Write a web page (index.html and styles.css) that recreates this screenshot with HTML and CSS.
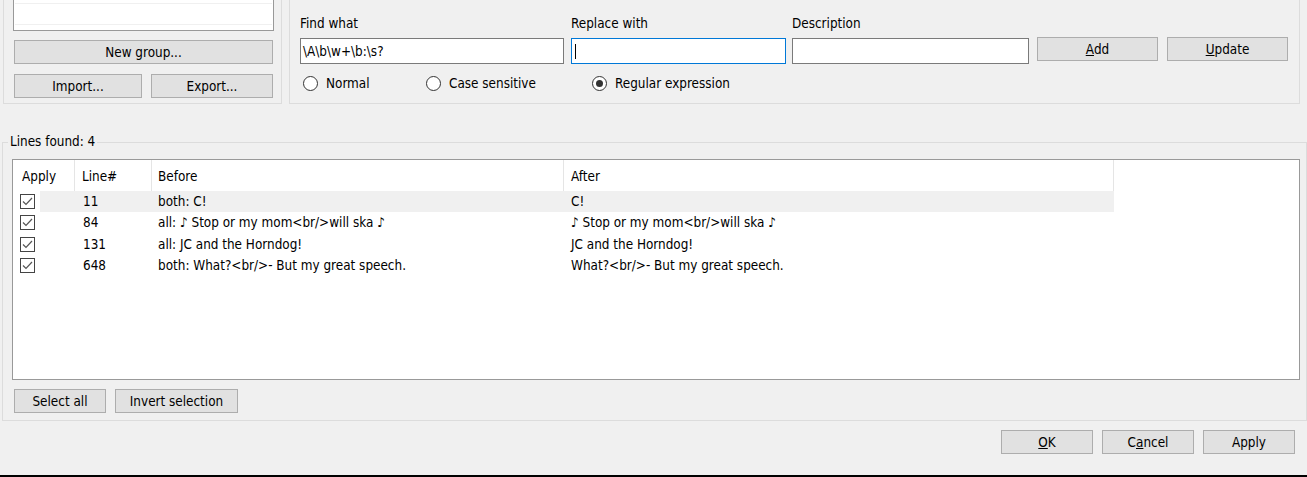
FILE: index.html
```html
<!DOCTYPE html>
<html>
<head>
<meta charset="utf-8">
<link rel="stylesheet" href="styles.css">
</head>
<body>
<div class="window">
  <div class="top">
    <div class="group group-top group-left">
      <div class="lb-small">
        <div class="lb-item first"></div>
        <div class="lb-item second"></div>
      </div>
      <button class="btn btn-newgroup">New group...</button>
      <div class="btn-row left-row">
        <button class="btn btn-import">Import...</button>
        <button class="btn btn-export">Export...</button>
      </div>
    </div>
    <div class="group group-top group-right">
      <div class="fields">
        <div class="field f-find">
          <span class="lbl">Find what</span>
          <div class="input">\A\b\w+\b:\s?</div>
        </div>
        <div class="field f-replace">
          <span class="lbl">Replace with</span>
          <div class="input focus"><span class="caret"></span></div>
        </div>
        <div class="field f-desc">
          <span class="lbl">Description</span>
          <div class="input"></div>
        </div>
        <button class="btn btn-add"><u>A</u>dd</button>
        <button class="btn btn-update"><u>U</u>pdate</button>
      </div>
      <div class="radios">
        <span class="radio r1"><span class="circle"></span>Normal</span>
        <span class="radio r2"><span class="circle"></span>Case sensitive</span>
        <span class="radio r3"><span class="circle checked"></span>Regular expression</span>
      </div>
    </div>
  </div>

  <div class="group group-lines">
    <span class="legend">Lines found: 4</span>
    <div class="listview">
      <div class="lv-header">
        <div class="col c-apply">Apply</div>
        <div class="col c-line">Line#</div>
        <div class="col c-before">Before</div>
        <div class="col c-after">After</div>
      </div>
      <div class="lv-row sel">
        <div class="cb-cell"><svg class="cb" width="15" height="15" viewBox="0 0 15 15"><rect x="0.5" y="0.5" width="14" height="14" fill="#fff" stroke="#444"/><polyline points="3,7.5 6,10.5 12,4" fill="none" stroke="#555" stroke-width="1.2"/></svg></div>
        <div class="row-body"><div class="pad"></div><div class="cell v-line">11</div><div class="cell v-before">both: C!</div><div class="cell v-after">C!</div></div>
      </div>
      <div class="lv-row">
        <div class="cb-cell"><svg class="cb" width="15" height="15" viewBox="0 0 15 15"><rect x="0.5" y="0.5" width="14" height="14" fill="#fff" stroke="#444"/><polyline points="3,7.5 6,10.5 12,4" fill="none" stroke="#555" stroke-width="1.2"/></svg></div>
        <div class="row-body"><div class="pad"></div><div class="cell v-line">84</div><div class="cell v-before">all: ♪ Stop or my mom&lt;br/&gt;will ska ♪</div><div class="cell v-after">♪ Stop or my mom&lt;br/&gt;will ska ♪</div></div>
      </div>
      <div class="lv-row">
        <div class="cb-cell"><svg class="cb" width="15" height="15" viewBox="0 0 15 15"><rect x="0.5" y="0.5" width="14" height="14" fill="#fff" stroke="#444"/><polyline points="3,7.5 6,10.5 12,4" fill="none" stroke="#555" stroke-width="1.2"/></svg></div>
        <div class="row-body"><div class="pad"></div><div class="cell v-line">131</div><div class="cell v-before">all: JC and the Horndog!</div><div class="cell v-after">JC and the Horndog!</div></div>
      </div>
      <div class="lv-row">
        <div class="cb-cell"><svg class="cb" width="15" height="15" viewBox="0 0 15 15"><rect x="0.5" y="0.5" width="14" height="14" fill="#fff" stroke="#444"/><polyline points="3,7.5 6,10.5 12,4" fill="none" stroke="#555" stroke-width="1.2"/></svg></div>
        <div class="row-body"><div class="pad"></div><div class="cell v-line">648</div><div class="cell v-before">both: What?&lt;br/&gt;- But my great speech.</div><div class="cell v-after">What?&lt;br/&gt;- But my great speech.</div></div>
      </div>
    </div>
    <div class="btn-row lines-row">
      <button class="btn btn-select">Select all</button>
      <button class="btn btn-invert">Invert selection</button>
    </div>
  </div>

  <div class="dialog-btns">
    <button class="btn btn-dlg"><u>O</u>K</button>
    <button class="btn btn-dlg">C<u>a</u>ncel</button>
    <button class="btn btn-dlg">Apply</button>
  </div>
  <div class="taskbar"></div>
</div>
</body>
</html>
```

FILE: styles.css
```css
* { box-sizing: border-box; }
html, body { margin: 0; padding: 0; }
body {
  width: 1307px;
  height: 477px;
  overflow: hidden;
  background: #f0f0f0;
  font-family: "DejaVu Sans Condensed", "DejaVu Sans", sans-serif;
  font-size: 13.4px;
  color: #000;
}
.window { display: flex; flex-direction: column; height: 477px; }
.top { display: flex; height: 104px; flex: none; }
.group { border: 1px solid #dcdcdc; }
.group-top { border-top: 0; height: 104px; }
.group-left { margin-left: 3px; width: 279px; display: flex; flex-direction: column; }
.lb-small {
  margin-left: 9px; width: 261px; height: 31px;
  background: #fff; border: 1px solid #999; border-top: 0;
  display: flex; flex-direction: column;
}
.lb-item { height: 1px; background: #f0f0f0; margin: 0 1px; }
.lb-item.first { margin-top: 3px; }
.lb-item.second { margin-top: 20px; }

.btn {
  font: inherit; color: #000;
  background: #e1e1e1; border: 1px solid #adadad;
  height: 24px; padding: 0;
  display: flex; align-items: center; justify-content: center;
  white-space: nowrap;
}
.btn-newgroup { margin: 9px 0 0 10px; width: 259px; }
.btn-row { display: flex; }
.left-row { margin: 10px 0 0 10px; gap: 9px; }
.btn-import { width: 128px; }
.btn-export { width: 122px; }

.group-right { margin-left: 7px; width: 1011px; padding-top: 16px; }
.fields { display: flex; align-items: flex-start; }
.field { display: flex; flex-direction: column; }
.lbl { line-height: 16px; height: 16px; margin-bottom: 6px; white-space: nowrap; }
.input {
  height: 26px; background: #fff; border: 1px solid #7a7a7a;
  padding-left: 2px; display: flex; align-items: center; white-space: pre;
}
.input.focus { border-color: #0078d7; }
.caret { width: 1px; height: 15px; background: #000; margin-left: 1px; }
.f-find { margin-left: 10px; width: 264px; }
.f-replace { margin-left: 7px; width: 215px; }
.f-desc { margin-left: 6px; width: 237px; }
.btn-add { margin-left: 8px; margin-top: 21px; width: 121px; }
.btn-update { margin-left: 9px; margin-top: 21px; width: 121px; }

.radios { display: flex; align-items: center; height: 16px; margin-top: 11px; padding-left: 13px; }
.radio { display: flex; align-items: center; white-space: nowrap; }
.r1 { width: 123px; }
.r2 { width: 166px; }
.circle {
  width: 15px; height: 15px; border: 1px solid #333; border-radius: 50%;
  background: #fff; margin-right: 8px;
  display: flex; align-items: center; justify-content: center;
}
.circle.checked::after {
  content: ""; width: 7px; height: 7px; border-radius: 50%; background: #333;
}

.group-lines {
  margin-top: 38px; margin-left: 2px; width: 1305px; height: 279px;
  position: relative; padding-top: 16px; flex: none;
}
.legend {
  position: absolute; top: -9px; left: 5px; padding: 0 2px;
  background: #f0f0f0; line-height: 16px; white-space: nowrap;
}
.listview {
  margin-left: 9px; width: 1288px; height: 221px;
  background: #fff; border: 1px solid #999;
}
.lv-header { display: flex; height: 31px; }
.col {
  border-right: 1px solid #e5e5e5; display: flex; align-items: center;
  padding-top: 2px; white-space: nowrap;
}
.c-apply { width: 62px; padding-left: 9px; }
.c-line { width: 77px; padding-left: 7px; }
.c-before { width: 412px; padding-left: 6px; }
.c-after { width: 550px; padding-left: 7px; }
.lv-row { display: flex; height: 21.33px; }
.cb-cell { width: 27px; display: flex; align-items: center; padding-left: 7px; }
.cb { display: block; }
.row-body { display: flex; }
.lv-row.sel .row-body { background: #f0f0f0; }
.pad { width: 35px; }
.cell { display: flex; align-items: center; white-space: nowrap; overflow: hidden; }
.v-line { width: 77px; padding-left: 8px; }
.v-before { width: 412px; padding-left: 6px; }
.v-after { width: 550px; padding-left: 7px; }

.lines-row { margin: 9px 0 0 11px; gap: 9px; }
.btn-select { width: 92px; }
.btn-invert { width: 123px; }

.dialog-btns { display: flex; justify-content: flex-end; gap: 9px; margin-top: 9px; padding-right: 12px; flex: none; }
.btn-dlg { width: 92px; }
.taskbar { margin-top: 21px; height: 10px; background: #000; flex: none; }
```
